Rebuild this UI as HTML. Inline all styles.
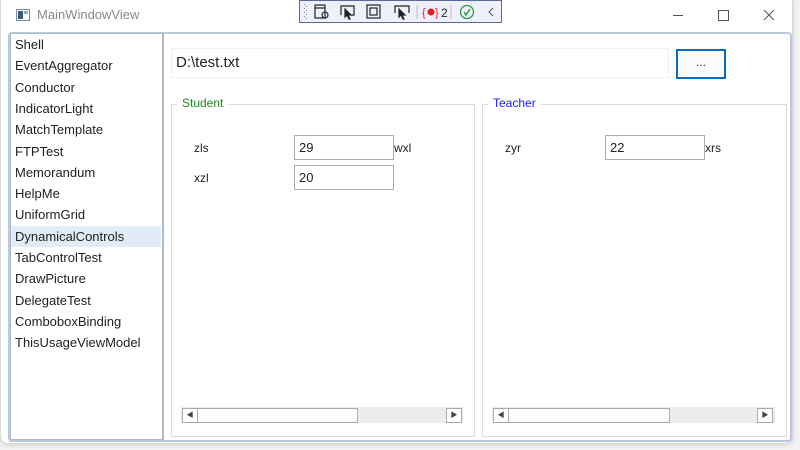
<!DOCTYPE html>
<html><head><meta charset="utf-8"><style>
*{margin:0;padding:0;box-sizing:border-box}
body{width:800px;height:450px;background:#f3f3f3;position:relative;overflow:hidden;font-family:"Liberation Sans","Noto Sans CJK SC",sans-serif;color:#222}
.abs{position:absolute}
.win{left:0;top:0;width:793px;height:444px;background:#fff;border:1px solid #d8d8d8;border-top:none;border-radius:0 0 8px 8px;box-shadow:0 1px 6px rgba(0,0,0,.15)}
.title{left:37px;top:7px;font-size:13px;color:#8a8a8a}
.client{left:8px;top:32px;width:784px;height:410px;border:2px solid #b9cadf;border-radius:4px;background:#fff}
.list{left:10px;top:33px;width:154px;height:407px;border:1px solid #b0bac6;border-right:2px solid #b0bac6;background:#fff}
.item{position:absolute;left:4px;font-size:13px;color:#222;height:21px;line-height:21px}
.sel{left:11px;top:226px;width:150px;height:21px;background:#e1ecf8}
.file{left:171px;top:48px;width:498px;height:30px;border:1px solid #f0f0f0;font-size:15px;line-height:28px;padding-left:4px;color:#222}
.btn{left:676px;top:49px;width:50px;height:30px;border:2px solid #0a6cc0;background:#fbfbfb;text-align:center;font-size:12px;line-height:22px}
.grp{border:1px solid #dcdcdc}
.leg{font-size:12px;background:#fff;padding:0 5px;top:96px}
.lbl{font-size:12px}
.tb{width:100px;height:25px;border:1px solid #acacac;font-size:13px;line-height:23px;padding-left:4px}
.sb{height:16px;background:#ececec}
.sbb{width:16px;height:15px;border:1px solid #aaa;background:#fff;font-size:7px;line-height:13px;text-align:center;color:#444}
.thumb{height:15px;border:1px solid #aaa;background:#fdfdfd}
.toolbar{left:299px;top:0;width:203px;height:23px;background:#eef1fb;border:1px solid #5a68a0}
</style></head><body>
<div class="abs win"></div>
<svg class="abs" style="left:16px;top:9px" width="14" height="12"><rect x="0.5" y="0.5" width="13" height="11" fill="#fff" stroke="#7a8a9a"/><rect x="2" y="2" width="5" height="8" fill="#3a5a7a"/><rect x="8" y="2" width="4" height="3" fill="#9ab"/></svg>
<div class="abs title">MainWindowView</div>
<div class="abs toolbar">
<svg width="203" height="22" style="position:absolute;left:0;top:0">
<g fill="#888"><rect x="4" y="3" width="1" height="1"/><rect x="6" y="5" width="1" height="1"/><rect x="4" y="7" width="1" height="1"/><rect x="6" y="9" width="1" height="1"/><rect x="4" y="11" width="1" height="1"/><rect x="6" y="13" width="1" height="1"/><rect x="4" y="15" width="1" height="1"/><rect x="6" y="17" width="1" height="1"/></g>
<g stroke="#222" fill="none" stroke-width="1.2"><rect x="15" y="4" width="10" height="13"/><line x1="15" y1="7" x2="25" y2="7"/><circle cx="25" cy="14" r="3"/>
<path d="M41 14V5h13v9h-3"/><path d="M45 8l6 6h-3l2 4-1 0-2-4-2 2z" fill="#222"/>
<rect x="67" y="4" width="13" height="13"/><rect x="70" y="7" width="7" height="7"/>
<path d="M95 12V5h14v7"/><path d="M99 8l6 6h-3l2 4-1 0-2-4-2 2z" fill="#222"/></g>
<line x1="117" y1="4" x2="117" y2="18" stroke="#bbb"/>
<circle cx="131" cy="11" r="3.5" fill="#d22"/><text x="122" y="15" font-size="11" fill="#d22" font-family="Liberation Sans">{</text><text x="135" y="15" font-size="11" fill="#d22" font-family="Liberation Sans">}</text>
<text x="141" y="16" font-size="12" fill="#222" font-family="Liberation Sans">2</text>
<line x1="151" y1="4" x2="151" y2="18" stroke="#bbb"/>
<circle cx="167" cy="11" r="6.5" fill="none" stroke="#2a9a3a" stroke-width="1.3"/><path d="M164 11l2 3 4-6" stroke="#2a9a3a" fill="none" stroke-width="1.4"/>
<path d="M193 7l-4 4 4 4" stroke="#555" fill="none"/>
</svg></div>
<svg class="abs" style="left:660px;top:0" width="130" height="30"><line x1="13" y1="15.5" x2="23" y2="15.5" stroke="#555"/><rect x="58.5" y="10.5" width="10" height="10" fill="none" stroke="#555"/><path d="M104 10l10 10M114 10l-10 10" stroke="#555"/></svg>
<div class="abs client"></div>
<div class="abs list"></div>
<div class="abs sel"></div>
<div class="abs" style="left:11px;top:34px;width:150px">
<div class="item" style="top:0">Shell</div>
<div class="item" style="top:21.3px">EventAggregator</div>
<div class="item" style="top:42.6px">Conductor</div>
<div class="item" style="top:63.9px">IndicatorLight</div>
<div class="item" style="top:85.2px">MatchTemplate</div>
<div class="item" style="top:106.5px">FTPTest</div>
<div class="item" style="top:127.8px">Memorandum</div>
<div class="item" style="top:149.1px">HelpMe</div>
<div class="item" style="top:170.4px">UniformGrid</div>
<div class="item" style="top:191.7px">DynamicalControls</div>
<div class="item" style="top:213px">TabControlTest</div>
<div class="item" style="top:234.3px">DrawPicture</div>
<div class="item" style="top:255.6px">DelegateTest</div>
<div class="item" style="top:276.9px">ComboboxBinding</div>
<div class="item" style="top:298.2px">ThisUsageViewModel</div>
</div>
<div class="abs file">D:\test.txt</div>
<div class="abs btn">...</div>

<div class="abs grp" style="left:171px;top:104px;width:304px;height:333px"></div>
<div class="abs leg" style="left:177px;color:#1a8a1a">Student</div>
<div class="abs lbl" style="left:194px;top:141px">zls</div>
<div class="abs tb" style="left:294px;top:135px">29</div>
<div class="abs lbl" style="left:394px;top:141px">wxl</div>
<div class="abs lbl" style="left:194px;top:171px">xzl</div>
<div class="abs tb" style="left:294px;top:165px">20</div>
<div class="abs sb" style="left:181px;top:407px;width:282px"></div>
<div class="abs sbb" style="left:182px;top:408px">◀</div>
<div class="abs thumb" style="left:197px;top:408px;width:161px"></div>
<div class="abs sbb" style="left:446px;top:408px">▶</div>

<div class="abs grp" style="left:482px;top:104px;width:305px;height:333px"></div>
<div class="abs leg" style="left:488px;color:#1a1aff">Teacher</div>
<div class="abs lbl" style="left:505px;top:141px">zyr</div>
<div class="abs tb" style="left:605px;top:135px">22</div>
<div class="abs lbl" style="left:705px;top:141px">xrs</div>
<div class="abs sb" style="left:492px;top:407px;width:283px"></div>
<div class="abs sbb" style="left:493px;top:408px">◀</div>
<div class="abs thumb" style="left:508px;top:408px;width:162px"></div>
<div class="abs sbb" style="left:757px;top:408px">▶</div>
</body></html>
